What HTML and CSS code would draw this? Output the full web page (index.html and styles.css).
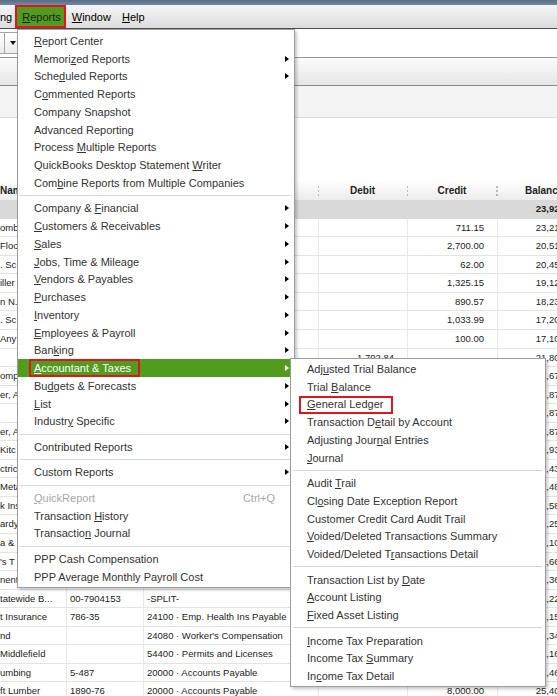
FILE: index.html
```html
<!doctype html>
<html>
<head>
<meta charset="utf-8">
<title>Reports</title>
<link rel="stylesheet" href="styles.css">
</head>
<body>
<div class="app">
	<div class="titlebar"></div>
	<div class="menubar">
		<span class="mb-item mb-cut">ng</span>
		<span class="mb-item mb-open"><u>R</u>eports</span>
		<span class="mb-item"><u>W</u>indow</span>
		<span class="mb-item"><u>H</u>elp</span>
	</div>
	<div class="toolbar">
		<div class="combo"><span class="combo-field"></span><span class="combo-btn"><i class="down"></i></span></div>
	</div>
	<div class="band band-top"></div>
	<div class="band band-low"></div>

	<!-- report grid behind the menus -->
	<div class="report">
		<div class="row head">
			<div class="c name">Name</div><div class="c"></div><div class="c"></div>
			<div class="c mid">Debit</div><div class="c mid">Credit</div><div class="c bal">Balance</div>
		</div>
		<div class="row total">
			<div class="c name"></div><div class="c"></div><div class="c"></div>
			<div class="c amt"></div><div class="c amt"></div><div class="c amt last">23,921.27</div>
		</div>
		<div class="row"><div class="c name">ombi</div><div class="c"></div><div class="c"></div><div class="c amt"></div><div class="c amt">711.15</div><div class="c amt last">23,210.12</div></div>
		<div class="row"><div class="c name">Floo</div><div class="c"></div><div class="c"></div><div class="c amt"></div><div class="c amt">2,700.00</div><div class="c amt last">20,510.12</div></div>
		<div class="row"><div class="c name">. Sc</div><div class="c"></div><div class="c"></div><div class="c amt"></div><div class="c amt">62.00</div><div class="c amt last">20,452.12</div></div>
		<div class="row"><div class="c name">iller</div><div class="c"></div><div class="c"></div><div class="c amt"></div><div class="c amt">1,325.15</div><div class="c amt last">19,126.97</div></div>
		<div class="row"><div class="c name">n N.</div><div class="c"></div><div class="c"></div><div class="c amt"></div><div class="c amt">890.57</div><div class="c amt last">18,236.40</div></div>
		<div class="row"><div class="c name">. Sc</div><div class="c"></div><div class="c"></div><div class="c amt"></div><div class="c amt">1,033.99</div><div class="c amt last">17,202.41</div></div>
		<div class="row"><div class="c name">Any</div><div class="c"></div><div class="c"></div><div class="c amt"></div><div class="c amt">100.00</div><div class="c amt last">17,102.41</div></div>
		<div class="row"><div class="c name"></div><div class="c"></div><div class="c"></div><div class="c amt">1,702.84</div><div class="c amt"></div><div class="c amt last">21,804.25</div></div>
		<div class="row"><div class="c name">omp</div><div class="c"></div><div class="c"></div><div class="c amt"></div><div class="c amt"></div><div class="c amt last">21,671.10</div></div>
		<div class="row"><div class="c name">er, A</div><div class="c"></div><div class="c"></div><div class="c amt"></div><div class="c amt"></div><div class="c amt last">21,871.10</div></div>
		<div class="row"><div class="c name"></div><div class="c"></div><div class="c"></div><div class="c amt"></div><div class="c amt"></div><div class="c amt last">21,871.10</div></div>
		<div class="row"><div class="c name">er, A</div><div class="c"></div><div class="c"></div><div class="c amt"></div><div class="c amt"></div><div class="c amt last">21,871.10</div></div>
		<div class="row"><div class="c name">Kitc</div><div class="c"></div><div class="c"></div><div class="c amt"></div><div class="c amt"></div><div class="c amt last">21,931.45</div></div>
		<div class="row"><div class="c name">ctric</div><div class="c"></div><div class="c"></div><div class="c amt"></div><div class="c amt"></div><div class="c amt last">21,431.45</div></div>
		<div class="row"><div class="c name">Meta</div><div class="c"></div><div class="c"></div><div class="c amt"></div><div class="c amt"></div><div class="c amt last">21,481.45</div></div>
		<div class="row"><div class="c name">k Ins</div><div class="c"></div><div class="c"></div><div class="c amt"></div><div class="c amt"></div><div class="c amt last">21,581.45</div></div>
		<div class="row"><div class="c name">ardy</div><div class="c"></div><div class="c"></div><div class="c amt"></div><div class="c amt"></div><div class="c amt last">21,251.45</div></div>
		<div class="row"><div class="c name">a &amp; S</div><div class="c"></div><div class="c"></div><div class="c amt"></div><div class="c amt"></div><div class="c amt last">21,101.45</div></div>
		<div class="row"><div class="c name">'s T</div><div class="c"></div><div class="c"></div><div class="c amt"></div><div class="c amt"></div><div class="c amt last">21,661.45</div></div>
		<div class="row"><div class="c name">nent</div><div class="c"></div><div class="c"></div><div class="c amt"></div><div class="c amt"></div><div class="c amt last">21,361.45</div></div>
		<div class="row"><div class="c name">tatewide B...</div><div class="c">00-7904153</div><div class="c">-SPLIT-</div><div class="c amt"></div><div class="c amt"></div><div class="c amt last">21,221.45</div></div>
		<div class="row"><div class="c name">t Insurance</div><div class="c">786-35</div><div class="c">24100 · Emp. Health Ins Payable</div><div class="c amt"></div><div class="c amt"></div><div class="c amt last">21,151.45</div></div>
		<div class="row"><div class="c name">nd</div><div class="c"></div><div class="c">24080 · Worker's Compensation</div><div class="c amt"></div><div class="c amt"></div><div class="c amt last">21,341.45</div></div>
		<div class="row"><div class="c name">Middlefield</div><div class="c"></div><div class="c">54400 · Permits and Licenses</div><div class="c amt"></div><div class="c amt"></div><div class="c amt last">21,161.45</div></div>
		<div class="row"><div class="c name">umbing</div><div class="c">5-487</div><div class="c">20000 · Accounts Payable</div><div class="c amt"></div><div class="c amt"></div><div class="c amt last">21,461.45</div></div>
		<div class="row"><div class="c name">ft Lumber</div><div class="c">1890-76</div><div class="c">20000 · Accounts Payable</div><div class="c amt"></div><div class="c amt">8,000.00</div><div class="c amt last">25,401.45</div></div>
	</div>

	<!-- Reports drop-down -->
	<ul class="menu main">
		<li><span><u>R</u>eport Center</span></li>
		<li><span>Memori<u>z</u>ed Reports</span><i class="arrow"></i></li>
		<li><span>Sche<u>d</u>uled Reports</span><i class="arrow"></i></li>
		<li><span>C<u>o</u>mmented Reports</span></li>
		<li><span>Company Snapshot</span></li>
		<li><span>Advanced Reporting</span></li>
		<li><span>Process <u>M</u>ultiple Reports</span></li>
		<li><span>QuickBooks Desktop Statement <u>W</u>riter</span></li>
		<li><span>Com<u>b</u>ine Reports from Multiple Companies</span></li>
		<li class="sep"></li>
		<li><span>Company &amp; <u>F</u>inancial</span><i class="arrow"></i></li>
		<li><span><u>C</u>ustomers &amp; Receivables</span><i class="arrow"></i></li>
		<li><span><u>S</u>ales</span><i class="arrow"></i></li>
		<li><span><u>J</u>obs, Time &amp; Mileage</span><i class="arrow"></i></li>
		<li><span><u>V</u>endors &amp; Payables</span><i class="arrow"></i></li>
		<li><span><u>P</u>urchases</span><i class="arrow"></i></li>
		<li><span><u>I</u>nventory</span><i class="arrow"></i></li>
		<li><span><u>E</u>mployees &amp; Payroll</span><i class="arrow"></i></li>
		<li><span>Ban<u>k</u>ing</span><i class="arrow"></i></li>
		<li class="active marked mark-acct"><span><u>A</u>ccountant &amp; Taxes</span><i class="arrow"></i></li>
		<li><span>Bu<u>d</u>gets &amp; Forecasts</span><i class="arrow"></i></li>
		<li><span><u>L</u>ist</span><i class="arrow"></i></li>
		<li><span>Industr<u>y</u> Specific</span><i class="arrow"></i></li>
		<li class="sep"></li>
		<li><span>Contributed Reports</span><i class="arrow"></i></li>
		<li class="sep"></li>
		<li><span>Custom Reports</span><i class="arrow"></i></li>
		<li class="sep"></li>
		<li class="off"><span><u>Q</u>uickReport</span><span class="key">Ctrl+Q</span></li>
		<li><span>Transaction <u>H</u>istory</span></li>
		<li><span>Transactio<u>n</u> Journal</span></li>
		<li class="sep"></li>
		<li><span>PPP Cash Compensation</span></li>
		<li><span>PPP Average Monthly Payroll Cost</span></li>
	</ul>

	<!-- Accountant & Taxes submenu -->
	<ul class="menu sub">
		<li><span>Adj<u>u</u>sted Trial Balance</span></li>
		<li><span>Trial <u>B</u>alance</span></li>
		<li class="marked mark-gl"><span><u>G</u>eneral Ledger</span></li>
		<li><span>Transaction D<u>e</u>tail by Account</span></li>
		<li><span>Adjusting Jour<u>n</u>al Entries</span></li>
		<li><span><u>J</u>ournal</span></li>
		<li class="sep"></li>
		<li><span>Audit <u>T</u>rail</span></li>
		<li><span>Cl<u>o</u>sing Date Exception Report</span></li>
		<li><span>Customer Credit Card Audit Trail</span></li>
		<li><span><u>V</u>oided/Deleted Transactions Summary</span></li>
		<li><span>Voided/Deleted T<u>r</u>ansactions Detail</span></li>
		<li class="sep"></li>
		<li><span>Transaction List by <u>D</u>ate</span></li>
		<li><span><u>A</u>ccount Listing</span></li>
		<li><span><u>F</u>ixed Asset Listing</span></li>
		<li class="sep"></li>
		<li><span><u>I</u>ncome Tax Preparation</span></li>
		<li><span>Income Tax <u>S</u>ummary</span></li>
		<li><span>In<u>c</u>ome Tax Detail</span></li>
	</ul>
</div>
</body>
</html>
```

FILE: styles.css
```css
/* QuickBooks style report menu */
html,body{
	margin:0;
	font-family:"Liberation Sans", Arial, sans-serif;
	font-size:11px;
	background:#fff;
	overflow:hidden;
}
.app{
	position:relative;
	width:557px;
	height:696px;
	overflow:hidden;
}
.titlebar{
	height:5px;
	background:linear-gradient(#566d85,#7189a0);
}
.menubar{
	height:23px;
	display:flex;
	background:linear-gradient(#f5f5f5,#dcdcdc);
	border-bottom:1px solid #4f4f4f;
	color:#000;
}
.mb-item{
	display:flex;
	align-items:center;
	padding:0 5px 0 6px;
}
.mb-cut{
	padding:0 3px 0 0;
}
.mb-open{
	background:#519b1f;
	border:2px solid #e3141c;
	padding:0 3px 0 5px;
	color:#1b1b1b;
}
.toolbar{
	height:28px;
	display:flex;
	align-items:center;
	background:#fff;
}
.combo{
	display:flex;
	height:22px;
	margin-left:-30px;
	box-sizing:border-box;
	border:1px solid #a5a5a5;
	background:linear-gradient(#fff,#ececec);
}
.combo-field{
	width:33px;
}
.combo-btn{
	width:16px;
	display:flex;
	align-items:center;
	justify-content:center;
	border-left:1px solid #a5a5a5;
}
.down{
	width:0;
	height:0;
	border-top:4px solid #111;
	border-left:3.5px solid transparent;
	border-right:3.5px solid transparent;
}
.band{
	border-top:1px solid #9a9a9a;
}
.band-top{
	height:27px;
	background:linear-gradient(#fbfbfb,#e6e6e6);
}
.band-low{
	height:31px;
	background:#f4f4f4;
	border-top-color:#8c8c8c;
	border-bottom:1px solid #dcdcdc;
}

/* report table */
.report{
	padding-top:62px;
	color:#1c1c1c;
	font-size:9.5px;
}
.row{
	display:grid;
	grid-template-columns:66px 77px 175px 89px 90px 81px;
	width:578px;
	height:18.56px;
	box-sizing:border-box;
	border-bottom:1px solid #e4e4e4;
}
.c{
	border-left:1px solid #e8e8e8;
	padding:0 3px;
	line-height:17.5px;
	white-space:nowrap;
	overflow:hidden;
}
.c.name{
	border-left:none;
	padding:0;
}
.c.amt{
	text-align:right;
	padding-right:13px;
}
.c.last{
	padding-right:0;
	overflow:visible;
}
.row.head{
	height:20px;
	background:linear-gradient(#fff,#ececec);
	border-bottom:none;
	font-weight:bold;
	font-size:10px;
	color:#222;
}
.row.head .c{
	position:relative;
	border-left:none;
	line-height:21px;
}
.row.head .c:not(.name)::before{
	content:"";
	position:absolute;
	left:-1px;
	top:6px;
	height:10px;
	border-left:2px dotted #b9b9b9;
}
.row.head .mid{
	text-align:center;
}
.row.head .bal{
	padding-left:28px;
	overflow:visible;
}
.row.total{
	height:18.7px;
	background:#d9d9d9;
	border-bottom:none;
	font-weight:bold;
}
.row.total .c{
	border-left:none;
}

/* menus */
.menu{
	position:absolute;
	margin:0;
	list-style:none;
	background:#fff;
	border:1px solid #9d9d9d;
	box-shadow:2px 2px 3px rgba(0,0,0,0.22);
	color:#333;
}
.main{
	left:17px;
	top:29px;
	width:276px;
	padding:2px 0 1px;
}
.sub{
	left:290px;
	top:358px;
	width:254px;
	padding:1px 0;
}
.menu li{
	position:relative;
	height:17.75px;
	display:flex;
	align-items:center;
	padding:0 5px 0 16px;
	white-space:nowrap;
}
.menu li.sep{
	height:1px;
	padding:0;
	margin:3.25px 3px 3.5px 2px;
	background:#d6d6d6;
}
.arrow{
	margin-left:auto;
	width:0;
	height:0;
	border-left:4px solid #000;
	border-top:3.5px solid transparent;
	border-bottom:3.5px solid transparent;
}
.menu li.active{
	background:#519b1f;
	color:#fff;
}
.menu li.active .arrow{
	border-left-color:#fff;
}
.menu li.off{
	color:#a8a8a8;
}
.key{
	margin-left:auto;
	margin-right:14px;
}
.marked::after{
	content:"";
	position:absolute;
	top:0;
	height:18px;
	box-sizing:border-box;
	border:2px solid #e3141c;
}
.mark-acct::after{
	left:11px;
	width:111px;
}
.mark-gl::after{
	left:8px;
	width:94px;
}
```
